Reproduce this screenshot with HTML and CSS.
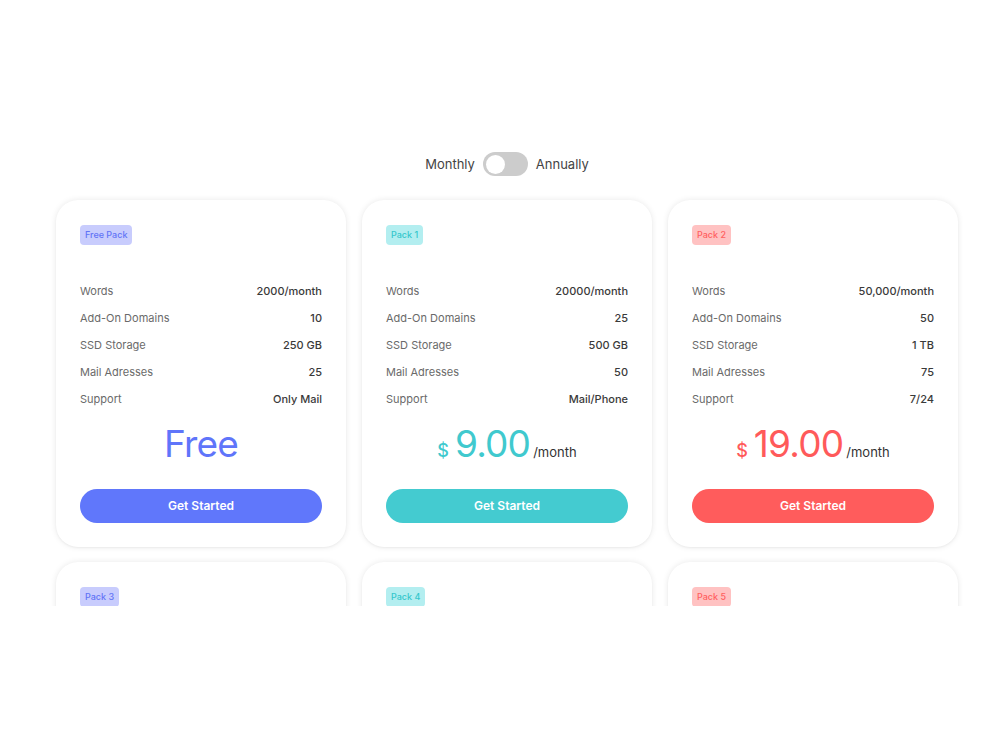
FILE: index.html
```html
<!DOCTYPE html>
<html>
<head>
<meta charset="utf-8">
<link rel="stylesheet" href="styles.css">
</head>
<body>
<div class="page">
  <div class="toggle-row">
    <span class="toggle-label">Monthly</span>
    <span class="switch"><span class="knob"></span></span>
    <span class="toggle-label">Annually</span>
  </div>
  <div class="cards-wrap">
    <div class="cards">
      <div class="card blue">
        <div class="badge">Free Pack</div>
        <ul class="rows">
          <li><span>Words</span><b>2000/month</b></li>
          <li><span>Add-On Domains</span><b>10</b></li>
          <li><span>SSD Storage</span><b>250 GB</b></li>
          <li><span>Mail Adresses</span><b>25</b></li>
          <li><span>Support</span><b>Only Mail</b></li>
        </ul>
        <div class="price"><span class="amount">Free</span></div>
        <button class="btn">Get Started</button>
      </div>
      <div class="card teal">
        <div class="badge">Pack 1</div>
        <ul class="rows">
          <li><span>Words</span><b>20000/month</b></li>
          <li><span>Add-On Domains</span><b>25</b></li>
          <li><span>SSD Storage</span><b>500 GB</b></li>
          <li><span>Mail Adresses</span><b>50</b></li>
          <li><span>Support</span><b>Mail/Phone</b></li>
        </ul>
        <div class="price"><span class="cur">$</span><span class="amount">9.00</span><span class="per">/month</span></div>
        <button class="btn">Get Started</button>
      </div>
      <div class="card red">
        <div class="badge">Pack 2</div>
        <ul class="rows">
          <li><span>Words</span><b>50,000/month</b></li>
          <li><span>Add-On Domains</span><b>50</b></li>
          <li><span>SSD Storage</span><b>1 TB</b></li>
          <li><span>Mail Adresses</span><b>75</b></li>
          <li><span>Support</span><b>7/24</b></li>
        </ul>
        <div class="price"><span class="cur">$</span><span class="amount">19.00</span><span class="per">/month</span></div>
        <button class="btn">Get Started</button>
      </div>
      <div class="card blue">
        <div class="badge">Pack 3</div>
      </div>
      <div class="card teal">
        <div class="badge">Pack 4</div>
      </div>
      <div class="card red">
        <div class="badge">Pack 5</div>
      </div>
    </div>
  </div>
</div>
</body>
</html>
```
FILE: styles.css
```css
* { box-sizing: border-box; }
html, body { margin: 0; padding: 0; background: #fff; }
body { font-family: "Inter", "Lato", sans-serif; color: #333; }

.page { padding-top: 150px; }

.toggle-row {
  display: flex;
  align-items: center;
  justify-content: center;
  gap: 8px;
  height: 28px;
  margin-left: 14px;
}
.toggle-label { font-size: 13px; color: #444; }
.switch {
  width: 45px;
  height: 24px;
  border-radius: 12px;
  background: #cccccc;
  display: flex;
  align-items: center;
  padding: 0 3px;
}
.knob {
  width: 19px;
  height: 19px;
  border-radius: 50%;
  background: #fff;
}

.cards-wrap {
  margin: 14px 0 0 48px;
  width: 917px;
  height: 414px;
  padding: 8px;
  overflow: hidden;
}
.cards {
  display: grid;
  grid-template-columns: repeat(3, 290px);
  column-gap: 16px;
  row-gap: 15px;
}
.card {
  height: 347px;
  background: #fff;
  border-radius: 22px;
  box-shadow: 0 0 6px rgba(0,0,0,0.09), 0 1px 2px rgba(0,0,0,0.04);
  padding: 25px 24px 24px;
  display: flex;
  flex-direction: column;
}
.badge {
  align-self: flex-start;
  height: 20px;
  line-height: 20px;
  padding: 0 5px;
  border-radius: 4px;
  font-size: 9px;
  font-weight: 500;
}
.blue .badge { background: #c8ccfd; color: #6274f6; }
.teal .badge { background: #b3eef0; color: #35c7cc; }
.red .badge { background: #ffc2c2; color: #ff6060; }

.rows {
  list-style: none;
  margin: 32px 0 0;
  padding: 0;
}
.rows li {
  display: flex;
  justify-content: space-between;
  align-items: center;
  height: 27px;
  font-size: 11px;
}
.rows span { color: #6a6a6a; }
.rows b { font-weight: 500; color: #3a3a3a; }

.price {
  display: flex;
  justify-content: center;
  align-items: baseline;
  margin-top: 9px;
  height: 46px;
  line-height: 46px;
}
.amount { font-size: 37px; font-weight: 400; letter-spacing: -0.8px; }
.cur { font-size: 18px; font-weight: 500; margin-right: 6px; }
.per { font-size: 13px; color: #333; margin-left: 3px; }
.blue .price { color: #5f75fa; }
.teal .price { color: #40c9ce; }
.red .price { color: #ff5a5a; }

.btn {
  margin-top: auto;
  height: 34px;
  border: none;
  border-radius: 17px;
  color: #fff;
  font-family: "Inter", "Lato", sans-serif;
  font-size: 12px;
  font-weight: 600;
  padding-bottom: 2px;
}
.blue .btn { background: #6077fb; }
.teal .btn { background: #44cbd0; }
.red .btn { background: #ff5c5c; }
```
